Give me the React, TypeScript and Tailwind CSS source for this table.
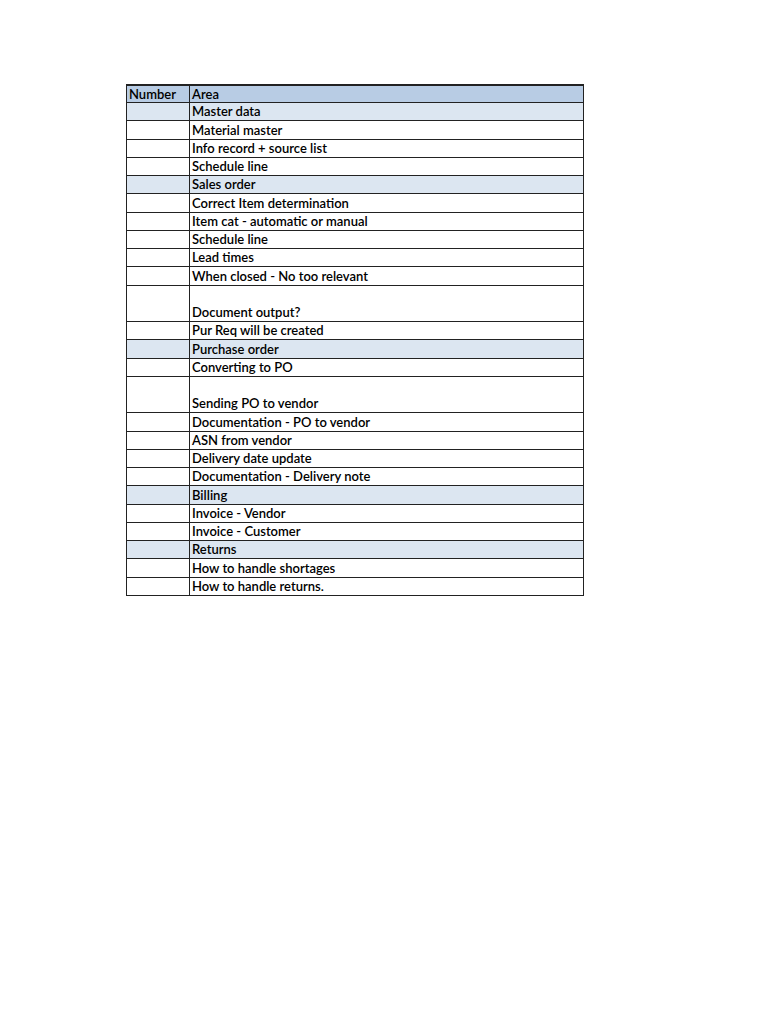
import React from 'react';

type Row = { area: string; kind?: 'head' | 'section'; tall?: boolean };

const rows: Row[] = [
  { area: 'Master data', kind: 'section' },
  { area: 'Material master' },
  { area: 'Info record + source list' },
  { area: 'Schedule line' },
  { area: 'Sales order', kind: 'section' },
  { area: 'Correct Item determination' },
  { area: 'Item cat - automatic or manual' },
  { area: 'Schedule line' },
  { area: 'Lead times' },
  { area: 'When closed - No too relevant' },
  { area: 'Document output?', tall: true },
  { area: 'Pur Req will be created' },
  { area: 'Purchase order', kind: 'section' },
  { area: 'Converting to PO' },
  { area: 'Sending PO to vendor', tall: true },
  { area: 'Documentation - PO to vendor' },
  { area: 'ASN from vendor' },
  { area: 'Delivery date update' },
  { area: 'Documentation - Delivery note' },
  { area: 'Billing', kind: 'section' },
  { area: 'Invoice - Vendor' },
  { area: 'Invoice - Customer' },
  { area: 'Returns', kind: 'section' },
  { area: 'How to handle shortages' },
  { area: 'How to handle returns.' },
];

// 行の高さ 18.25px を整数に丸めて配分する
const UNIT = 18.25;
const heightClass: Record<number, string> = {
  18: 'h-[18px]',
  19: 'h-[19px]',
  36: 'h-[36px]',
  37: 'h-[37px]',
};

const SheetRow: React.FC<{ row: Row; h: number }> = ({ row, h }) => {
  const bg = row.kind === 'section' ? 'bg-[#dce6f1]' : 'bg-white';
  return (
    <div className={'grid grid-cols-[63px_1fr] border-t border-[#222] ' + heightClass[h]}>
      <div className={'border-r border-[#222] ' + bg} />
      <div className={'flex items-end pl-[2px] pb-[1px] leading-[16px] ' + bg}>{row.area}</div>
    </div>
  );
};

export default function App() {
  let units = 0;
  const heights = rows.map((r) => {
    const start = Math.round(units * UNIT);
    units += r.tall ? 2 : 1;
    return Math.round(units * UNIT) - start;
  });

  return (
    <div
      className="min-h-screen w-full bg-white pt-[84px] pl-[126px] text-[13px] font-semibold text-black"
      style={{ fontFamily: 'Lato, "Open Sans", sans-serif' }}
    >
      <div className="w-[458px] border border-t-2 border-[#222]">
        {/* 見出し行 */}
        <div className="grid h-[16px] grid-cols-[63px_1fr] bg-[#b8cce4]">
          <div className="flex items-end border-r border-[#222] pl-[2px] leading-[16px]">Number</div>
          <div className="flex items-end pl-[2px] leading-[16px]">Area</div>
        </div>
        {rows.map((r, i) => (
          <SheetRow key={i} row={r} h={heights[i]} />
        ))}
      </div>
    </div>
  );
}
